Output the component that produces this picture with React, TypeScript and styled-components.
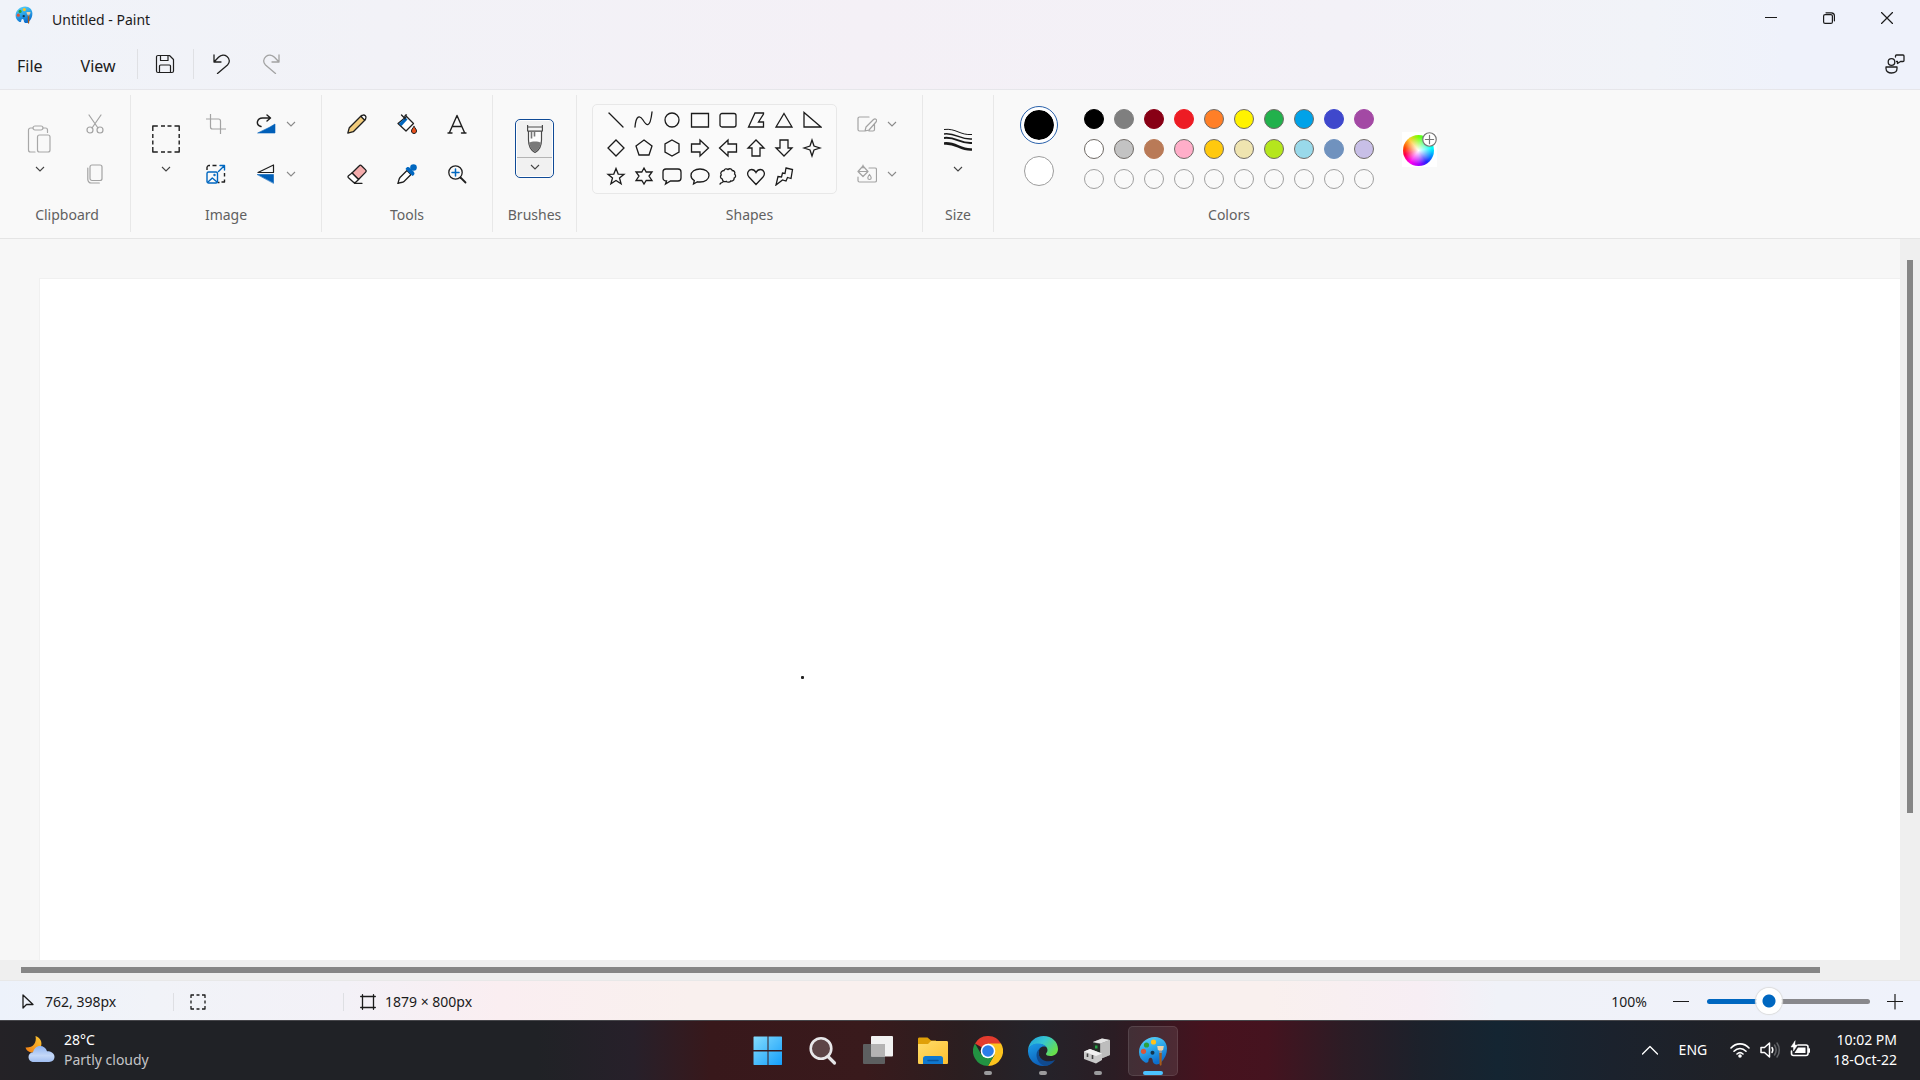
import React from "react";
import styled, { createGlobalStyle, css } from "styled-components";

const GlobalStyle = createGlobalStyle`
  *, *::before, *::after { box-sizing: border-box; }
  html, body, #root { height: 100%; margin: 0; }
  body { overflow: hidden; font-family: "Noto Sans", "Open Sans", sans-serif; font-size: 14px; line-height: 20px; color: #1b1b1b; }
  button { font: inherit; color: inherit; border: 0; padding: 0; margin: 0; background: none; cursor: default; }
  svg { display: block; flex: none; }
`;

/* ---------- window frame ---------- */

const Desktop = styled.div`
  display: flex;
  flex-direction: column;
  height: 100vh;
`;

const PaintWindow = styled.main`
  flex: 1;
  min-height: 0;
  display: flex;
  flex-direction: column;
`;

const WindowHeader = styled.header`
  border-bottom: 1px solid #e6e6ea;
  background: linear-gradient(90deg, #f0f3f9 0%, #f2f2f7 20%, #f4f0f6 45%, #f3f1f7 70%, #f1f3f8 86%, #eff2fb 93%);
`;

const TitleBar = styled.div`
  display: flex;
  align-items: flex-start;
  height: 39px;
  padding: 0 4px 0 15px;
`;

const AppIcon = styled.span`
  padding: 6px 0;
`;

const WindowTitle = styled.h1`
  flex: 1;
  margin: 0;
  padding: 10px 0 0 19px;
  font-size: 14px;
  font-weight: 400;
`;

const CaptionButton = styled.button`
  display: grid;
  place-items: center;
  width: 58px;
  height: 36px;
`;

const MenuBar = styled.nav`
  display: flex;
  align-items: center;
  height: 50px;
  padding: 0 5px 0 6px;
`;

const MenuItem = styled.button`
  height: 40px;
  padding: 3px 11px 0;
  font-size: 16px;
  & + & { margin-left: 16px; }
`;

const MenuDivider = styled.span`
  width: 1px;
  height: 30px;
  background: #dfe0e4;
`;

const IconButton = styled.button<{ $dim?: boolean }>`
  display: grid;
  place-items: center;
  width: 40px;
  height: 40px;
  color: ${(p) => (p.$dim ? "#a3a3a3" : "#1f1f1f")};
`;

const SaveSlot = styled.span`
  display: flex;
  padding: 0 8px 0 7px;
`;

const HistorySlot = styled.span`
  display: flex;
  gap: 9px;
  padding-left: 8px;
  flex: 1;
`;

/* ---------- ribbon ---------- */

const Ribbon = styled.div`
  display: flex;
  height: 149px;
  padding: 5px 0 6px;
  background: #f9f9f9;
  border-bottom: 1px solid #e5e5e5;
`;

const Group = styled.section<{ $width: number; $lead?: number; $last?: boolean }>`
  display: flex;
  flex-direction: column;
  flex: none;
  width: ${(p) => p.$width}px;
  padding-left: ${(p) => p.$lead ?? 0}px;
  border-right: ${(p) => (p.$last ? "0" : "1px solid #e8e8e8")};
`;

const GroupBody = styled.div<{ $inset?: number; $gap?: number }>`
  display: flex;
  align-items: flex-start;
  justify-content: ${(p) => (p.$inset === undefined ? "center" : "flex-start")};
  gap: ${(p) => p.$gap ?? 10}px;
  height: 108px;
  padding: 9px 0 0 ${(p) => p.$inset ?? 0}px;
`;

const GroupLabel = styled.h2`
  margin: 0;
  font-size: 14px;
  font-weight: 400;
  line-height: 24px;
  text-align: center;
  color: #616161;
`;

const TallButton = styled.button<{ $dim?: boolean }>`
  display: flex;
  flex-direction: column;
  align-items: center;
  gap: 10px;
  width: 48px;
  height: 90px;
  padding-top: 21px;
  color: ${(p) => (p.$dim ? "#a8a8a8" : "#1f1f1f")};
`;

const ToolGrid = styled.div<{ $cols: string }>`
  display: grid;
  grid-template-columns: ${(p) => p.$cols};
  grid-auto-rows: 40px;
  gap: 10px;
`;

const SplitButton = styled.button<{ $dim?: boolean }>`
  display: flex;
  align-items: center;
  gap: 9px;
  width: 60px;
  height: 40px;
  padding-left: 10px;
  color: ${(p) => (p.$dim ? "#a3a3a3" : "#1f1f1f")};
`;

const BrushButton = styled.button`
  display: flex;
  flex-direction: column;
  width: 39px;
  height: 59px;
  margin-top: 15px;
  padding: 1px;
  border: 1px solid #0f4a96;
  border-radius: 5px;
  background: #fff;
`;

const BrushPart = styled.span<{ $tall?: boolean }>`
  display: grid;
  place-items: center;
  width: 100%;
  height: ${(p) => (p.$tall ? 37 : 18)}px;
  background: #f1f1f1;
  border-bottom: ${(p) => (p.$tall ? "1px solid #b4b4b4" : "0")};
`;

const ShapePanel = styled.div`
  display: grid;
  grid-template-columns: repeat(8, 28px);
  grid-auto-rows: 28px;
  width: 245px;
  height: 90px;
  padding: 1px 9px;
  border: 1px solid #e8e8e8;
  border-radius: 5px;
  background: #fafafa;
`;

const ShapeButton = styled.button`
  display: grid;
  place-items: center;
`;

const ActiveColors = styled.div`
  display: flex;
  flex-direction: column;
  align-items: center;
  gap: 12px;
  padding-top: 2px;
`;

const PrimaryColor = styled.button`
  width: 38px;
  height: 38px;
  padding: 3px;
  border: 1px solid #2b62ab;
  border-radius: 50%;
  background: #000 content-box;
  box-shadow: inset 0 0 0 3px #fff;
`;

const SecondaryColor = styled.button`
  width: 30px;
  height: 30px;
  border: 1px solid #9d9d9d;
  border-radius: 50%;
  background: #fff;
`;

const Palette = styled.div`
  display: grid;
  grid-template-columns: repeat(10, 30px);
  grid-auto-rows: 30px;
  place-items: center;
  margin: 0 13px 0 11px;
`;

const Swatch = styled.button<{ $fill: string; $ring: string }>`
  width: 20px;
  height: 20px;
  border: 1px solid ${(p) => p.$ring};
  border-radius: 50%;
  background: ${(p) => p.$fill};
`;

const WheelButton = styled.button`
  position: relative;
  width: 35px;
  height: 35px;
  margin-top: 28px;
  padding: 3px 3px 1px 1px;
  background: #fff;
`;

const Wheel = styled.span`
  display: block;
  width: 31px;
  height: 31px;
  border-radius: 50%;
  background:
    radial-gradient(circle, #fff 0%, rgba(255, 255, 255, 0.6) 25%, rgba(255, 255, 255, 0) 62%),
    conic-gradient(#7f0 0deg, #2f6 35deg, #0ff 80deg, #09f 110deg, #22f 145deg, #a0f 180deg, #f0e 215deg, #f04 255deg, #f40 280deg, #fc3 320deg, #7f0 360deg);
`;

const WheelBadge = styled.span`
  position: absolute;
  top: 0;
  right: 0;
  color: #777;
`;

/* ---------- work area ---------- */

const WorkArea = styled.div`
  flex: 1;
  min-height: 0;
  display: grid;
  grid-template: 1fr 21px / 1fr 20px;
  background: #efefef;
`;

const Viewport = styled.div`
  display: flex;
  padding: 39px 0 0 39px;
  background: #f7f7f7;
`;

const Canvas = styled.div`
  position: relative;
  flex: 1;
  background: #fff;
  border: solid #f0f0f0;
  border-width: 1px 0 0 1px;
`;

const PaintedDot = styled.span`
  position: absolute;
  left: 761px;
  top: 397px;
  width: 3px;
  height: 3px;
  border-radius: 1px;
  background: #222;
`;

const VerticalScroll = styled.div`
  display: flex;
  flex-direction: column;
  align-items: center;
  padding: 21px 0;
`;

const VerticalThumb = styled.span`
  width: 6px;
  height: 81.5%;
  background: #868686;
`;

const HorizontalScroll = styled.div`
  grid-column: 1 / -1;
  display: flex;
  align-items: flex-start;
  padding: 7px 21px 0;
  border-bottom: 1px solid #e8e8e8;
`;

const HorizontalThumb = styled.span`
  width: 95.8%;
  height: 6px;
  background: #868686;
`;

/* ---------- status bar ---------- */

const StatusBar = styled.footer`
  display: flex;
  align-items: center;
  height: 39px;
  padding: 2px 8px 0 20px;
  background: linear-gradient(90deg, #edf2fb 0%, #f1f3f8 8%, #f3f1f7 18%, #faeef1 26%, #f9f0ee 36%, #f9f0ee 66%, #f7eef4 74%, #f0f2f8 78%, #eff2fb 100%);
`;

const StatusCell = styled.div<{ $width?: number }>`
  display: flex;
  align-items: center;
  gap: 9px;
  width: ${(p) => (p.$width ? p.$width + "px" : "auto")};
  height: 18px;
  ${(p) =>
    p.$width
      ? css`
          border-right: 1px solid #dedfe3;
          margin-right: 16px;
        `
      : css`
          flex: 1;
        `}
`;

const ZoomValue = styled.output`
  margin-right: 17px;
`;

const ZoomButton = styled.button`
  display: grid;
  place-items: center;
  width: 34px;
  height: 32px;
`;

const ZoomSlider = styled.input`
  appearance: none;
  width: 163px;
  height: 26px;
  margin: 0 8px 0 9px;
  background: transparent;

  &::-webkit-slider-runnable-track {
    height: 5px;
    border-radius: 3px;
    background: linear-gradient(90deg, #0067c0 38%, #88888c 38%);
  }
  &::-webkit-slider-thumb {
    appearance: none;
    width: 26px;
    height: 26px;
    margin-top: -11px;
    border-radius: 50%;
    background: radial-gradient(circle, #0067c0 6px, #fff 7px);
    box-shadow: 0 0 1px 1px #dcdcdc;
  }
`;

/* ---------- taskbar ---------- */

const Taskbar = styled.footer`
  display: grid;
  grid-template-columns: 1fr auto 1fr;
  align-items: center;
  height: 60px;
  border-top: 1px solid #46464a;
  color: #fff;
  background: linear-gradient(90deg, #242226 0%, #202226 5%, #202226 28%, #27202a 33%, #38181b 37%, #391a1c 45%, #2b1e20 50%, #24232a 54%, #2b1d24 58%, #47121e 63%, #45131f 66%, #2c1c25 70%, #1c212b 74%, #142532 78%, #1b222d 84%, #202126 91%, #202126 100%);
`;

const Weather = styled.button`
  display: flex;
  align-items: center;
  gap: 9px;
  padding: 0 0 2px 25px;
  text-align: left;
`;

const WeatherText = styled.span`
  display: flex;
  flex-direction: column;
`;

const Muted = styled.span`
  color: #c4c4c6;
`;

const AppList = styled.div`
  display: flex;
  gap: 5px;
`;

const AppButton = styled.button<{ $active?: boolean }>`
  position: relative;
  display: grid;
  place-items: center;
  width: 50px;
  height: 50px;
  border-radius: 5px;
  border: 1px solid ${(p) => (p.$active ? "rgba(255,255,255,.1)" : "transparent")};
  background: ${(p) => (p.$active ? "rgba(255,255,255,.09)" : "none")};
`;

const RunMark = styled.span<{ $active?: boolean }>`
  position: absolute;
  bottom: 0;
  left: 50%;
  transform: translateX(-50%);
  width: ${(p) => (p.$active ? 20 : 8)}px;
  height: 4px;
  border-radius: 2px;
  background: ${(p) => (p.$active ? "#4cc2ff" : "#9b9b9d")};
`;

const Tray = styled.div`
  display: flex;
  align-items: center;
  justify-content: flex-end;
  padding: 0 23px 2px 0;
`;

const TrayButton = styled.button<{ $gap: number }>`
  display: flex;
  align-items: center;
  gap: 10px;
  margin-right: ${(p) => p.$gap}px;
`;

const Clock = styled.time`
  display: flex;
  flex-direction: column;
  align-items: flex-end;
`;

/* ---------- icons ---------- */

type IconProps = { size?: number; box?: number; w?: number; children: React.ReactNode };

const Icon = ({ size = 20, box = 20, w = 1.2, children }: IconProps) => (
  <svg width={size} height={size} viewBox={`0 0 ${box} ${box}`} fill="none" stroke="currentColor" strokeWidth={w} strokeLinecap="round" strokeLinejoin="round" aria-hidden="true">
    {children}
  </svg>
);

const Chevron = ({ dim }: { dim?: boolean }) => (
  <svg width="12" height="12" viewBox="0 0 12 12" fill="none" stroke={dim ? "#8a8a8a" : "#444"} strokeWidth="1.1" aria-hidden="true">
    <path d="M2 4l4 4 4-4" />
  </svg>
);

const PaletteIcon = ({ size }: { size: number }) => (
  <svg width={size} height={size} viewBox="0 0 30 30" aria-hidden="true">
    <defs>
      <linearGradient id="pal" x1="0" y1="0" x2="0.4" y2="1">
        <stop offset="0" stopColor="#62d7fb" />
        <stop offset="0.5" stopColor="#2fa9ea" />
        <stop offset="1" stopColor="#0c6fcf" />
      </linearGradient>
    </defs>
    <path fill="url(#pal)" d="M17 1c7 0 12 5 12 11.500 0 5-2 10-6 14-2.500 2.500-6 2.500-7.500.5-1.300-1.700-.3-4-2-5-1.700-.7-3 .8-3 2.500 0 2-1.700 3-3.700 1.700C3 24 1 20.500 1 16 1 8 8 1 17 1z" />
    <circle cx="14.500" cy="16.800" r="2" fill="#12354f" />
    <circle cx="15.500" cy="6" r="2.600" fill="#ffc21a" />
    <circle cx="8.500" cy="9" r="2.600" fill="#2ba13b" />
    <circle cx="5.500" cy="15.300" r="2.600" fill="#d9563a" />
    <path fill="#a65a1a" d="M21.200 16h2.600l-.2 12.500c0 1.500-2 1.500-2 0z" />
    <path fill="#e9d3ac" d="M19.200 10h6.600l-.6 3.500-1.500 1.500h-2.400l-1.500-1.500z" />
    <path fill="#8d969e" d="M21.200 14.500h2.600V17h-2.600z" />
  </svg>
);

const shapes: { name: string; d: string }[] = [
  { name: "Line", d: "M3 3l14 14" },
  { name: "Curve", d: "M1 17C2 5 6 5 9 10s7 10 9-8" },
  { name: "Oval", d: "M10 3a7 7 0 1 0 0 14 7 7 0 1 0 0-14z" },
  { name: "Rectangle", d: "M1.500 3.500h17v13.500h-17z" },
  { name: "Rounded rectangle", d: "M4 3.500h12a2 2 0 0 1 2 2V15a2 2 0 0 1-2 2H4a2 2 0 0 1-2-2V5.500a2 2 0 0 1 2-2z" },
  { name: "Polygon", d: "M9 3h8.500v1L12.500 12H17.500v5H2.500z" },
  { name: "Triangle", d: "M10 3.500L18 17H2z" },
  { name: "Right triangle", d: "M2 2.500V17h17z" },
  { name: "Diamond", d: "M10 2l8 8-8 8-8-8z" },
  { name: "Pentagon", d: "M10 2l8 6-3 9H5L2 8z" },
  { name: "Hexagon", d: "M10 2l7 4v8l-7 4-7-4V6z" },
  { name: "Right arrow", d: "M1.500 6H10V2l8.500 8-8.500 8v-4H1.500z" },
  { name: "Left arrow", d: "M18.500 6H10V2l-8.500 8 8.500 8v-4h8.500z" },
  { name: "Up arrow", d: "M6 18V10H2l8-8 8 8h-4v8z" },
  { name: "Down arrow", d: "M6 2v8H2l8 8 8-8h-4V2z" },
  { name: "Four-point star", d: "M10 2l2 6 6 2-6 2-2 6-2-6-6-2 6-2z" },
  { name: "Five-point star", d: "M10 2.500l2.200 5.600 5.800.2-4.500 3.700 1.600 5.700-5.100-3.200-5.100 3.200 1.600-5.700L2 8.300l5.800-.2z" },
  { name: "Six-point star", d: "M10 2l2.200 4H18l-3 4 3 4.500h-5.800L10 18l-2.200-3.500H2L5 10 2 6h5.800z" },
  { name: "Rounded callout", d: "M4 3h12a3 3 0 0 1 3 3v6a3 3 0 0 1-3 3h-7.500l-5 3 1-3H4a3 3 0 0 1-3-3V6a3 3 0 0 1 3-3z" },
  { name: "Oval callout", d: "M10 3c5 0 9 2.700 9 6.500S15 16 10 16c-1 0-1.700 0-2.500-.2L3.500 18l.8-3.500C2.300 13.400 1 11.500 1 9.500 1 5.700 5 3 10 3z" },
  { name: "Cloud callout", d: "M6 4.500c.5-2 3-2 4-1 1.500-1.500 4-.5 4.200 1 2 0 3.200 2 2.400 3.500 1.700 1.500 1 3.500-.5 4.200.2 2.200-1.900 3.200-3.200 2.700-1 1.700-3.700 1.500-4.600.5-1.900.8-3.900-.3-3.900-2.200-2.200-.8-2.400-3.200-1.200-4.300C1.800 6.700 4 4.500 6 4.500zM3 17l-1 1M5.500 15.500l-1.500 1" },
  { name: "Heart", d: "M10 18.500l-7-7.500c-3-3.500-.5-7.500 2.500-7.500 2 0 3.500 1 4.500 3 1-2 2.500-3 4.500-3 3 0 5.500 4 2.500 7.500z" },
  { name: "Lightning", d: "M12 2l6.500 1.500-1.500 9-3.500-1-1.500 3.500-3.500-1-6.500 5 2-8.500 3.500.5 1-4 2.500.5z" },
];

const topColors = ["#000000", "#7f7f7f", "#880015", "#ed1c24", "#ff7f27", "#fff200", "#22b14c", "#00a2e8", "#3f48cc", "#a349a4"];
const lowColors = ["#ffffff", "#c3c3c3", "#b97a57", "#ffaec9", "#ffc90e", "#efe4b0", "#b5e61d", "#99d9ea", "#7092be", "#c8bfe7"];
const ringless = ["#000000", "#880015", "#ed1c24", "#b97a57", "#3f48cc", "#a349a4", "#7092be", "#7f7f7f"];

const ringFor = (c: string) => (ringless.includes(c) ? c : "#6f6a66");

/* ---------- sections ---------- */

const Header = () => (
  <WindowHeader>
    <TitleBar>
      <AppIcon><PaletteIcon size={18} /></AppIcon>
      <WindowTitle>Untitled - Paint</WindowTitle>
      <CaptionButton aria-label="Minimize"><Icon size={12} box={12}><path d="M0 5.500h12" /></Icon></CaptionButton>
      <CaptionButton aria-label="Restore">
        <Icon size={12} box={12}><rect x=".6" y="2.600" width="8.800" height="8.800" rx="1.500" /><path d="M3 .8h5.500a3 3 0 0 1 2.900 3v5" /></Icon>
      </CaptionButton>
      <CaptionButton aria-label="Close"><Icon size={12} box={12}><path d="M.5.5l11 11M11.500.5l-11 11" /></Icon></CaptionButton>
    </TitleBar>
    <MenuBar>
      <MenuItem>File</MenuItem>
      <MenuItem>View</MenuItem>
      <SaveDivider />
      <SaveSlot>
        <IconButton aria-label="Save">
          <Icon><path d="M3 1.500h11.500l4 4V17a1.500 1.500 0 0 1-1.500 1.500H3A1.500 1.500 0 0 1 1.500 17V3A1.500 1.500 0 0 1 3 1.500zM5.500 1.500v5h7.500v-5M4.500 18.500V12a1 1 0 0 1 1-1h9a1 1 0 0 1 1 1v6.500" /></Icon>
        </IconButton>
      </SaveSlot>
      <MenuDivider />
      <HistorySlot>
        <IconButton aria-label="Undo"><Icon w={1.3}><path d="M2 1v7h7M2 8l4.500-4.700C9 .8 12.500.5 15 2.500c3 2.500 3 6 .5 8.500L5.500 19.500" /></Icon></IconButton>
        <IconButton aria-label="Redo" $dim><Icon w={1.3}><path d="M18 1v7h-7M18 8l-4.500-4.700C11 .8 7.500.5 5 2.500c-3 2.500-3 6-.5 8.500l10 8.500" /></Icon></IconButton>
      </HistorySlot>
      <IconButton aria-label="Send feedback">
        <Icon w={1.3}><circle cx="6.500" cy="8" r="3.300" /><path d="M1 13h11v1.500C12 17.500 9.500 19 6.500 19S1 17.500 1 14.500zM10.500 3V2a1 1 0 0 1 1-1H18a1 1 0 0 1 1 1v4.500a1 1 0 0 1-1 1h-2.500l-3 2v-2h-1" /></Icon>
      </IconButton>
    </MenuBar>
  </WindowHeader>
);

const SaveDivider = styled(MenuDivider)`
  margin-left: 10px;
`;

const ClipboardGroup = () => (
  <Group $width={131} $lead={4}>
    <GroupBody $inset={12} $gap={11}>
      <TallButton aria-label="Paste" $dim>
        <Icon size={28} box={28}>
          <path d="M7 3H4.500a2 2 0 0 0-2 2v20a2 2 0 0 0 2 2H9M17 3h2.500a2 2 0 0 1 2 2v2.500" /><rect x="7" y="1" width="10" height="4" rx="2" /><rect x="11.500" y="10" width="12.500" height="17" rx="2" />
        </Icon>
        <Chevron />
      </TallButton>
      <ToolGrid $cols="40px">
        <IconButton aria-label="Cut" $dim><Icon><path d="M4 1l9 13M16 1L7 14" /><circle cx="5" cy="16" r="3" /><circle cx="15" cy="16" r="3" /></Icon></IconButton>
        <IconButton aria-label="Copy" $dim><Icon><rect x="5" y="1" width="12" height="15.500" rx="2" /><path d="M2.800 4v11.500a3.500 3.500 0 0 0 3.500 3.500h8" /></Icon></IconButton>
      </ToolGrid>
    </GroupBody>
    <GroupLabel>Clipboard</GroupLabel>
  </Group>
);

const ImageGroup = () => (
  <Group $width={191}>
    <GroupBody $inset={11} $gap={6}>
      <TallButton aria-label="Select">
        <Icon size={28} box={28} w={1.4}>
          <path strokeLinecap="butt" d="M.8 6V1h5M9 1h4M15.500 1h4M22.500 1h4.700v5M27.200 9v4M27.200 15.500v4M27.200 22v5h-4.700M19.500 27h-4M13 27H9M5.800 27h-5v-5M.8 19.500v-4M.8 13V9" />
        </Icon>
        <Chevron />
      </TallButton>
      <ToolGrid $cols="40px 60px">
        <IconButton aria-label="Crop" $dim><Icon><path d="M0 5h12.500a2 2 0 0 1 2 2v13M4.500 0v13a2 2 0 0 0 2 2H20" /></Icon></IconButton>
        <SplitButton aria-label="Rotate">
          <Icon w={1.4}><path d="M14 13L19 10v9H2z" fill="#005fb8" stroke="#005fb8" strokeWidth=".6" /><path d="M5 12.500C2 11.500 1 9.500 1.500 7.500 2.200 5 4 4 6.500 4H14M11 1l3.500 3L11 7" /></Icon>
          <Chevron dim />
        </SplitButton>
        <IconButton aria-label="Resize and skew">
          <Icon w={1.4}><path strokeLinecap="butt" d="M1 6V3.500C1 2.500 2 1.500 3 1.500h1M6.500 1.500h4M18.500 9v3.500M18.500 15.500V18h-3M13.500 18.500H12" /><g stroke="#0067c0"><rect x="1" y="8" width="10.500" height="11" rx="1.500" /><path d="M2 18l4.300-4L11 18M12.500 7.500L18.500 1.500M14 1.500h4.500V6" /><circle cx="8.500" cy="11" r=".5" /></g></Icon>
        </IconButton>
        <SplitButton aria-label="Flip">
          <Icon><path d="M17.500 1v7.500H2z" /><path d="M1.500 10.500h16V19z" fill="#005fb8" stroke="#005fb8" strokeWidth=".6" /></Icon>
          <Chevron dim />
        </SplitButton>
      </ToolGrid>
    </GroupBody>
    <GroupLabel>Image</GroupLabel>
  </Group>
);

const ToolsGroup = () => (
  <Group $width={171}>
    <GroupBody $inset={15}>
      <ToolGrid $cols="repeat(3, 40px)">
        <IconButton aria-label="Pencil"><Icon w={1.3}><path fill="#f2cc7c" d="M.8 19.200l1.500-5.500L14.500 1.500l4 4L6.300 17.700z" /><path fill="#fff" d="M14 2.500c1-1.500 3-2 4.300-.8 1.200 1.300.7 3.300-.8 4.300z" /></Icon></IconButton>
        <IconButton aria-label="Fill"><Icon w={1.3}><path fill="#fff" d="M9.500 2.500l7 7-7.500 7.500-8-7.500z" /><path fill="#0067c0" stroke="none" d="M8.500 3.500l2 2-6 6.500-2.800-2.300z" /><path d="M4.500 1l3.500 3.500M9.500 1c-1.500 0-2 1-1.500 4" /><path fill="#e8501c" strokeWidth="1" d="M17 12.500c1.500 2 2.500 3.200 2.500 4.500 0 1.500-1 2.500-2.500 2.500s-2.500-1-2.500-2.500c0-1.300 1-2.500 2.500-4.500z" /></Icon></IconButton>
        <IconButton aria-label="Text"><Icon w={1.4}><path d="M2.500 18.500L10 1.500l7.500 17M1 19h4M14.500 19h4.500M5.500 12.500h9" /></Icon></IconButton>
        <IconButton aria-label="Eraser"><Icon w={1.3}><path fill="#f4acac" d="M5 9l7.300-7.300a1.500 1.500 0 0 1 2.200 0l4.200 4.200a1.500 1.500 0 0 1 0 2.200L11.500 15.500z" /><path fill="#fff" d="M5 9l6.500 6.500-2.500 2.500c-.8.800-2 .8-2.800 0L1.500 13.700c-.6-.6-.6-1.400 0-2z" /><path d="M7.500 19.300H15" /></Icon></IconButton>
        <IconButton aria-label="Color picker"><Icon w={1.3}><path fill="#fff" d="M10 6.500l4 4-7 7c-1.500 1.500-4 .5-6.200 2.200C2 17 1.500 15.500 3 13.500z" /><g fill="#0067c0" stroke="none"><circle cx="16.500" cy="3.500" r="3.300" /><path d="M8.500 5c1.500-2.500 3-2.500 4.500-1l3.500 3.500c1.500 1.500 1.500 3.200-1 4.500z" /></g></Icon></IconButton>
        <IconButton aria-label="Magnifier"><Icon w={1.3}><circle cx="8.500" cy="8.500" r="6.700" /><path d="M13.500 13.500l5 5" strokeWidth="1.800" /><path d="M8.500 5v7M5 8.500h7" stroke="#0067c0" strokeWidth="1.500" /></Icon></IconButton>
      </ToolGrid>
    </GroupBody>
    <GroupLabel>Tools</GroupLabel>
  </Group>
);

const BrushesGroup = () => (
  <Group $width={84}>
    <GroupBody>
      <BrushButton aria-label="Brushes">
        <BrushPart $tall>
          <svg width="16" height="28" viewBox="0 0 16 28" fill="none" stroke="#4a4a4a" strokeWidth="1.200" aria-hidden="true">
            <path fill="#fff" d="M1.500 6h13v9c0 5-2 10-6.500 12.500C3.500 25 1.500 20 1.500 15z" />
            <path fill="#7a7a7a" stroke="none" d="M2 17.500c3-1.500 9-1.500 12 0-.5 4-2.500 7.500-6 9.500-3.500-2-5.500-5.500-6-9.500z" />
            <path fill="#f4f4f4" d="M.6 0v6h14.800V0M.6 2h14.800" />
            <path d="M4.500 7v6.500M7.500 7v4.500" stroke="#777" strokeWidth="1.600" />
          </svg>
        </BrushPart>
        <BrushPart><Chevron /></BrushPart>
      </BrushButton>
    </GroupBody>
    <GroupLabel>Brushes</GroupLabel>
  </Group>
);

const ShapesGroup = () => (
  <Group $width={346}>
    <GroupBody $inset={15}>
      <ShapePanel>
        {shapes.map((s) => (
          <ShapeButton key={s.name} aria-label={s.name}><Icon w={1.3}><path d={s.d} strokeLinejoin="miter" /></Icon></ShapeButton>
        ))}
      </ShapePanel>
      <ToolGrid $cols="60px">
        <SplitButton aria-label="Shape outline" $dim>
          <Icon><path d="M12 3H2.500A1.500 1.500 0 0 0 1 4.500v11A1.500 1.500 0 0 0 2.500 17H7M17.500 10.500v5a1.500 1.500 0 0 1-1.500 1.500h-4M8 17l1-4 7.500-7.500c2-1.500 4 .5 2.500 2.500L12 16z" /></Icon>
          <Chevron dim />
        </SplitButton>
        <SplitButton aria-label="Shape fill" $dim>
          <Icon><path d="M12 4h6a1.500 1.500 0 0 1 1.500 1.500v11A1.500 1.500 0 0 1 18 18H2.500A1.500 1.500 0 0 1 1 16.500V13M6 2l5 5.500-5 5-5-5zM1 7.500h10M6 1v3M12.500 10.500c1.200 1.500 1.700 2.300 1.700 3.200 0 1-.7 1.800-1.700 1.800s-1.700-.8-1.700-1.800c0-.9.500-1.700 1.700-3.200z" /></Icon>
          <Chevron dim />
        </SplitButton>
      </ToolGrid>
    </GroupBody>
    <GroupLabel>Shapes</GroupLabel>
  </Group>
);

const SizeGroup = () => (
  <Group $width={71}>
    <GroupBody>
      <TallButton aria-label="Size">
        <svg width="28" height="28" viewBox="0 0 28 28" fill="none" stroke="#1a1a1a" aria-hidden="true">
          <path d="M0 4.500c12-1.500 16 6 28 5" strokeWidth="1" />
          <path d="M0 9c12-1.500 16 6 28 5" strokeWidth="1.500" />
          <path d="M0 13c12-1.500 16 6 28 5" strokeWidth="2" />
          <path d="M0 18.500c12-1.500 16 7 28 6" strokeWidth="2.600" />
        </svg>
        <Chevron />
      </TallButton>
    </GroupBody>
    <GroupLabel>Size</GroupLabel>
  </Group>
);

const ColorsGroup = () => (
  <Group $width={470} $last>
    <GroupBody $inset={26}>
      <ActiveColors>
        <PrimaryColor aria-label="Color 1" />
        <SecondaryColor aria-label="Color 2" />
      </ActiveColors>
      <Palette>
        {[...topColors, ...lowColors].map((c) => <Swatch key={c} aria-label={c} $fill={c} $ring={ringFor(c)} />)}
        {topColors.map((c, i) => <Swatch key={"empty" + i} aria-label="Empty color slot" $fill="transparent" $ring="#a0a0a0" />)}
      </Palette>
      <WheelButton aria-label="Edit colors">
        <Wheel />
        <WheelBadge><Icon size={15} w={1.6}><circle cx="10" cy="10" r="9" fill="#fff" /><path d="M10 4.500v11M4.500 10h11" /></Icon></WheelBadge>
      </WheelButton>
    </GroupBody>
    <GroupLabel>Colors</GroupLabel>
  </Group>
);

const Status = () => (
  <StatusBar>
    <StatusCell $width={154}>
      <Icon size={16} box={16} w={1.3}><path d="M3 1v13l3.500-3.500H13z" /></Icon>
      <span>762, 398px</span>
    </StatusCell>
    <StatusCell $width={154}>
      <Icon size={16} box={16} w={1.3}><path strokeLinecap="butt" d="M1 4V1h3M6.500 1h3M12 1h3v3M15 6.500v3M15 12v3h-3M9.500 15h-3M4 15H1v-3M1 9.500v-3" /></Icon>
    </StatusCell>
    <StatusCell>
      <Icon size={16} box={16} w={1.3}><path d="M.7 2.500h14.600M.7 13.500h14.600M2.500.7v14.600M13.500.7v14.600" /></Icon>
      <span>1879 × 800px</span>
    </StatusCell>
    <ZoomValue htmlFor="zoom">100%</ZoomValue>
    <ZoomButton aria-label="Zoom out"><Icon size={16} box={16}><path d="M0 7.500h16" /></Icon></ZoomButton>
    <ZoomSlider id="zoom" type="range" aria-label="Zoom" min={0} max={100} defaultValue={36} />
    <ZoomButton aria-label="Zoom in"><Icon size={16} box={16}><path d="M.5 7.500h15M8 0v15" /></Icon></ZoomButton>
  </StatusBar>
);

/* ---------- taskbar icons ---------- */

const StartIcon = () => (
  <svg width="30" height="30" viewBox="0 0 30 30" aria-hidden="true">
    <defs><linearGradient id="win" gradientUnits="userSpaceOnUse" x1="0" y1="0" x2="30" y2="30"><stop offset="0" stopColor="#86ddfd" /><stop offset="1" stopColor="#109cfb" /></linearGradient></defs>
    <path fill="url(#win)" d="M1 .5h13.500V14H.5V1zM15.500.5h13l.5.5v13H15.500zM.5 15.500h14V29H1l-.5-.5zM15.500 15.500H29v13l-.5.5h-13z" />
  </svg>
);

const SearchIcon = () => (
  <svg width="30" height="30" viewBox="0 0 30 30" aria-hidden="true">
    <path d="M19.500 20l7 7" stroke="#e4e4e6" strokeWidth="3.200" strokeLinecap="round" />
    <circle cx="13" cy="12.500" r="10.300" fill="#5d4547" stroke="#e8e8ea" strokeWidth="2.600" />
  </svg>
);

const TaskViewIcon = () => (
  <svg width="30" height="30" viewBox="0 0 30 30" aria-hidden="true">
    <rect x="0" y="8" width="22" height="20" rx="1" fill="#5d5f60" />
    <rect x="8" y="0" width="22" height="20.500" rx="1" fill="#f1f1f1" />
    <path d="M8 8h14v12.500H8z" fill="#b4b3b3" />
  </svg>
);

const FolderIcon = () => (
  <svg width="30" height="30" viewBox="0 0 30 30" aria-hidden="true">
    <defs><linearGradient id="fold" x1="0" y1="0" x2="1" y2="1"><stop offset="0" stopColor="#ffdd6b" /><stop offset="1" stopColor="#fdc02f" /></linearGradient></defs>
    <path fill="#e0a008" d="M0 3c0-1 .5-1.500 1.500-1.500h8L13 4.500h5v8H0z" />
    <path fill="url(#fold)" d="M0 8h10l3-3h15.500c1 0 1.500.5 1.500 1.500v20c0 1-.5 1.500-1.500 1.500h-27C.5 28 0 27.500 0 26.500z" />
    <path fill="#0f78cf" d="M5 28v-5.500C5 21 6 20 7.500 20h15c1.500 0 2.500 1 2.500 2.500V28z" />
    <path d="M10 24.500h10" stroke="#08539a" strokeWidth="1.500" strokeLinecap="round" />
  </svg>
);

const ChromeIcon = () => (
  <svg width="30" height="30" viewBox="0 0 30 30" aria-hidden="true">
    <path fill="#e33b2e" d="M15 15L2 7.500a15 15 0 0 1 26 0z" />
    <path fill="#fcc31e" d="M15 15V7.500h13A15 15 0 0 1 15 30l6.500-11.200z" />
    <path fill="#229342" d="M15 15l6.500 3.800L15 30A15 15 0 0 1 2 7.500l6.500 11.300z" />
    <circle cx="15" cy="15" r="7.300" fill="#fff" />
    <circle cx="15" cy="15" r="5.800" fill="#2b7de9" />
  </svg>
);

const EdgeIcon = () => (
  <svg width="30" height="30" viewBox="0 0 30 30" aria-hidden="true">
    <defs>
      <linearGradient id="edgeTop" x1="0" y1="0" x2="1" y2=".6"><stop offset="0" stopColor="#1c9ce0" /><stop offset=".5" stopColor="#36c6d0" /><stop offset="1" stopColor="#67df4c" /></linearGradient>
      <linearGradient id="edgeLow" x1="0" y1="0" x2=".5" y2="1"><stop offset="0" stopColor="#1b9de8" /><stop offset="1" stopColor="#0c5cb5" /></linearGradient>
    </defs>
    <path fill="url(#edgeTop)" d="M0 14C1 5 8 0 15.500 0 24 0 30 6 30 13c0 4.500-3.500 7-7.500 7-3 0-4.500-1-4.500-2 0-1 1.500-1.500 1.500-4C19.500 10.500 15 8 10.500 8 5 8 1 11 0 14z" />
    <path fill="url(#edgeLow)" d="M0 14c1-4 5-6.500 10-6.500 4 0 7 1.500 8.500 3.500-5-1.500-8 1.500-8 5.500 0 7 6.500 12 14 9.500C22 29 18.500 30 15 30 6.500 30-.5 23 0 14z" />
    <path fill="#104a8e" d="M13 12c-1.500 1-2.500 2.700-2.500 4.500 0 7 8 11 16.500 7.500-2 3-5.500 5.500-9.500 6C12 29 8.500 24 8.500 19c0-3.500 2-6 4.500-7z" />
  </svg>
);

const DeviceIcon = () => (
  <svg width="30" height="30" viewBox="0 0 30 30" aria-hidden="true">
    <path fill="#8f8f8f" d="M10 6l9-3.500 8 1.500v15l-10 4-7-2z" />
    <path fill="#e4e4e4" d="M10 6l9-3.500 8 1.500-9.500 3.500z" />
    <path fill="#bdbdbd" d="M17.500 7.500L27 4v15l-9.500 4z" />
    <path fill="#252b27" d="M10 6.500l7 1.200v10.300l-7-1.500z" />
    <path fill="#25a244" d="M12 9.500h2.500v3H12z" />
    <path fill="#c9c9c9" d="M1 15.500l6-2.500 12 4.500V24l-6 3.500L1 23z" />
    <path fill="#f0f0f0" d="M1 15.500l6-2.500 12 4.500-6 2.500z" />
    <path d="M4.500 17.500V21M9.500 19v4" stroke="#444" strokeWidth="1.600" />
  </svg>
);

const WeatherIcon = () => (
  <svg width="30" height="30" viewBox="0 0 30 30" aria-hidden="true">
    <defs>
      <linearGradient id="moon" x1="1" y1="0" x2="0" y2="1"><stop offset="0" stopColor="#fcc934" /><stop offset="1" stopColor="#f07b12" /></linearGradient>
      <linearGradient id="cloud" x1="0" y1="0" x2="0" y2="1"><stop offset="0" stopColor="#8fb3f0" /><stop offset=".6" stopColor="#c4d8f8" /><stop offset="1" stopColor="#9fbdf0" /></linearGradient>
    </defs>
    <path fill="url(#moon)" d="M10.500 1c5 2 7 6 5.500 10.500C14 16 10 18 6 17.500 3.500 17 1 15 .5 12.500 8 13 12 8 10.500 1z" />
    <path fill="url(#cloud)" d="M9 27c-3 0-5.500-2-5.500-5 0-2.500 1.800-4.500 4.500-4.700C9 13.500 11.500 11 15 11c3.500 0 6 2 7 5.300 4 0 7.500 2 7.500 5.500 0 3-2 5.200-5.500 5.200z" />
  </svg>
);

const TaskbarSection = () => (
  <Taskbar>
    <Weather>
      <WeatherIcon />
      <WeatherText><span>28°C</span><Muted>Partly cloudy</Muted></WeatherText>
    </Weather>
    <AppList>
      <AppButton aria-label="Start"><StartIcon /></AppButton>
      <AppButton aria-label="Search"><SearchIcon /></AppButton>
      <AppButton aria-label="Task view"><TaskViewIcon /></AppButton>
      <AppButton aria-label="File Explorer"><FolderIcon /></AppButton>
      <AppButton aria-label="Chrome"><ChromeIcon /><RunMark /></AppButton>
      <AppButton aria-label="Edge"><EdgeIcon /><RunMark /></AppButton>
      <AppButton aria-label="Device"><DeviceIcon /><RunMark /></AppButton>
      <AppButton aria-label="Paint" $active><PaletteIcon size={30} /><RunMark $active /></AppButton>
    </AppList>
    <Tray>
      <TrayButton $gap={21} aria-label="Show hidden icons"><Icon size={16} box={16} w={1.4}><path d="M.5 12L8 4.500l7.500 7.500" /></Icon></TrayButton>
      <TrayButton $gap={23}>ENG</TrayButton>
      <TrayButton $gap={23} aria-label="Network, sound and battery">
        <Icon w={1.6}><path d="M1 8c5-5.500 13-5.500 18 0M4 11.200c3.500-3.700 8.500-3.700 12 0M7 14c2-1.800 4-1.800 6 0" /><circle cx="10" cy="16" r="1" fill="#fff" /></Icon>
        <Icon w={1.5}><path d="M1 7.500h3.500L9.500 3v14l-5-4.500H1z" /><path d="M12 7.500c1 1.500 1 3.500 0 5" /><path d="M14.500 5c2 3 2 7 0 10M17 3c3 4 3 10 0 14" stroke="#626468" /></Icon>
        <Icon w={1.6}><path d="M8 5h8a2 2 0 0 1 2 2v6.500a2 2 0 0 1-2 2H3.500a2 2 0 0 1-2-2V11M19.300 9v3" /><path d="M8 7.500h7.500V13H4.500z" fill="#fff" stroke="none" /><path d="M5 1L1 7h2.500v4L7.500 5H5z" fill="#fff" strokeWidth=".5" /></Icon>
      </TrayButton>
      <Clock dateTime="2022-10-18T22:02"><span>10:02 PM</span><span>18-Oct-22</span></Clock>
    </Tray>
  </Taskbar>
);

export default function App() {
  return (
    <Desktop>
      <GlobalStyle />
      <PaintWindow>
        <Header />
        <Ribbon>
          <ClipboardGroup />
          <ImageGroup />
          <ToolsGroup />
          <BrushesGroup />
          <ShapesGroup />
          <SizeGroup />
          <ColorsGroup />
        </Ribbon>
        <WorkArea>
          <Viewport><Canvas><PaintedDot /></Canvas></Viewport>
          <VerticalScroll><VerticalThumb /></VerticalScroll>
          <HorizontalScroll><HorizontalThumb /></HorizontalScroll>
        </WorkArea>
        <Status />
      </PaintWindow>
      <TaskbarSection />
    </Desktop>
  );
}
